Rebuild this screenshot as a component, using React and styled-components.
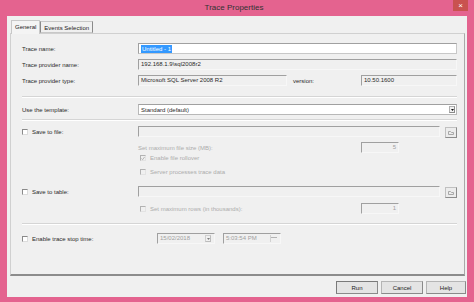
import React from "react";
import styled, { createGlobalStyle } from "styled-components";

const Global = createGlobalStyle`
  html, body { margin: 0; padding: 0; background: #e4638f; }
  body { font-family: "Liberation Sans", Arial, sans-serif; }
  * { box-sizing: border-box; }
`;

const Window = styled.div`
  width: 474px;
  height: 302px;
  background: #e4638f;
  display: flex;
  flex-direction: column;
  overflow: hidden;
`;

const TitleBar = styled.div`
  height: 16px;
  display: grid;
  grid-template-columns: 1fr auto 1fr;
  align-items: center;
  padding-right: 6px;
`;

const Title = styled.div`
  grid-column: 2;
  font-size: 8px;
  color: #333;
  line-height: 16px;
`;

const Close = styled.div`
  grid-column: 3;
  justify-self: end;
  align-self: start;
  width: 15px;
  height: 11px;
  background: #c9524f;
  color: #fff;
  font-size: 8px;
  line-height: 11px;
  text-align: center;
`;

const Client = styled.div`
  margin: 0 7px 5px 7px;
  flex: 1;
  background: #f0f0f0;
  display: flex;
  flex-direction: column;
`;

const Tabs = styled.div`
  height: 17px;
  display: flex;
  align-items: flex-end;
  padding-left: 4px;
`;

const Tab = styled.div`
  font-size: 6px;
  color: #222;
  height: ${(p) => (p.$active ? 14 : 12)}px;
  line-height: ${(p) => (p.$active ? 13 : 12)}px;
  padding: 0 3px;
  background: ${(p) => (p.$active ? "#f4f4f4" : "#f0f0f0")};
  border: 1px solid #c8c8c8;
  border-bottom: ${(p) => (p.$active ? "none" : "1px solid #c8c8c8")};
  border-left-color: ${(p) => (p.$active ? "#c8c8c8" : "#8a8a8a")};
  border-right-color: ${(p) => (p.$active ? "#c8c8c8" : "#8a8a8a")};
  position: relative;
  z-index: ${(p) => (p.$active ? 2 : 1)};
  margin-bottom: ${(p) => (p.$active ? -1 : 0)}px;
`;

const Panel = styled.div`
  margin: 0 2px 0 3px;
  height: 243px;
  border: 1px solid #d0d0d0;
  border-right: 1px solid #a9a9a9;
  border-bottom: 2px solid #8c8c8c;
  background: #f0f0f0;
  padding: 9px 7px 0 11px;
  display: flex;
  flex-direction: column;
`;

const Row = styled.div`
  display: flex;
  align-items: center;
  height: ${(p) => p.$h || 11}px;
  margin-top: ${(p) => p.$mt || 0}px;
  font-size: 6px;
  color: #2a2a2a;
`;

const Label = styled.div`
  width: ${(p) => p.$w || 116}px;
  flex: none;
  font-size: 6px;
  color: ${(p) => (p.$disabled ? "#acacac" : "#2a2a2a")};
  white-space: nowrap;
`;

const Field = styled.div`
  height: 11px;
  width: ${(p) => (p.$w ? `${p.$w}px` : "auto")};
  flex: ${(p) => (p.$w ? "none" : "1")};
  background: ${(p) => (p.$white ? "#fff" : "#f0f0f0")};
  border-top: 1px solid #a0a0a0;
  border-left: 1px solid #a0a0a0;
  border-right: 1px solid ${(p) => (p.$white ? "#c8c8c8" : "#f7f7f7")};
  border-bottom: 1px solid ${(p) => (p.$white ? "#c8c8c8" : "#f7f7f7")};
  font-size: 6px;
  line-height: 9px;
  padding: 0 2px;
  color: ${(p) => (p.$disabled ? "#a0a0a0" : "#2a2a2a")};
  white-space: nowrap;
  overflow: hidden;
  display: flex;
  align-items: center;
  justify-content: ${(p) => (p.$right ? "flex-end" : "flex-start")};
`;

const Selected = styled.span`
  background: #3399ff;
  color: #fff;
  line-height: 8px;
  padding: 0 1px;
`;

const Separator = styled.div`
  height: 2px;
  margin-top: ${(p) => p.$mt || 0}px;
  border-top: 1px solid #d5d5d5;
  border-bottom: 1px solid #ffffff;
`;

const Combo = styled.div`
  flex: 1;
  height: 11px;
  background: #fff;
  border: 1px solid #b8b8b8;
  border-top-color: #a0a0a0;
  display: flex;
  align-items: center;
  font-size: 6px;
  color: #2a2a2a;
  padding-left: 2px;
`;

const ComboText = styled.div`
  flex: 1;
`;

const DropBtn = styled.div`
  width: 6px;
  height: 7px;
  margin-right: 1px;
  border: 1px solid #b0b0b0;
  border-right-color: #8a8a8a;
  border-bottom-color: #8a8a8a;
  background: #f0f0f0;
  display: flex;
  align-items: center;
  justify-content: center;
  opacity: ${(p) => (p.$disabled ? 0.5 : 1)};
`;

const Check = styled.div`
  width: 6px;
  height: 6px;
  flex: none;
  border-top: 1px solid #8a8a8a;
  border-left: 1px solid #8a8a8a;
  border-right: 1px solid #dcdcdc;
  border-bottom: 1px solid #dcdcdc;
  background: ${(p) => (p.$disabled ? "#f0f0f0" : "#fff")};
  margin-right: ${(p) => p.$mr || 4}px;
  display: flex;
  align-items: center;
  justify-content: center;
  opacity: ${(p) => (p.$disabled ? 0.6 : 1)};
`;

const Browse = styled.div`
  width: 12px;
  height: 11px;
  margin-left: 5px;
  margin-top: 2px;
  flex: none;
  border: 1px solid #c0c0c0;
  border-right-color: #8c8c8c;
  border-bottom-color: #8c8c8c;
  background: #ececec;
  display: flex;
  align-items: center;
  justify-content: center;
`;

const Indent = styled.div`
  width: ${(p) => p.$w}px;
  flex: none;
`;

const Spacer = styled.div`
  flex: 1;
`;

const Spin = styled.div`
  width: 7px;
  height: 7px;
  display: flex;
  flex-direction: column;
  justify-content: space-between;
  border-left: 1px solid #c4c4c4;
  margin-left: auto;
  margin-right: 1px;
  opacity: 0.7;
`;

const SpinHalf = styled.div`
  height: 3px;
  border-bottom: 1px solid #9a9a9a;
`;

const Buttons = styled.div`
  display: flex;
  justify-content: flex-end;
  gap: 3px;
  padding: 5px 1px 0 0;
`;

const Button = styled.div`
  width: ${(p) => p.$w}px;
  height: 13px;
  background: #e4e4e4;
  border: 1px solid ${(p) => (p.$default ? "#7a7a7a" : "#b5b5b5")};
  border-right-color: #8a8a8a;
  border-bottom-color: #8a8a8a;
  font-size: 6px;
  color: #222;
  display: flex;
  align-items: center;
  justify-content: center;
`;

const Arrow = () => (
  <svg width="3" height="2" viewBox="0 0 3 2">
    <path d="M0 0h3L1.5 2z" fill="#111" />
  </svg>
);

const Tick = () => (
  <svg width="5" height="5" viewBox="0 0 5 5">
    <path d="M0.5 2.5l1.5 1.5 2.5-3.5" stroke="#777" strokeWidth="1" fill="none" />
  </svg>
);

const BrowseIcon = () => (
  <svg width="6" height="5" viewBox="0 0 6 5">
    <path d="M0.5 1.5h2l1 1h2v2h-5z" stroke="#a8a8a8" strokeWidth="1" fill="none" />
  </svg>
);

export default function App() {
  return (
    <>
      <Global />
      <Window>
        <TitleBar>
          <Title>Trace Properties</Title>
          <Close>×</Close>
        </TitleBar>
        <Client>
          <Tabs>
            <Tab $active>General</Tab>
            <Tab>Events Selection</Tab>
          </Tabs>
          <Panel>
            <Row>
              <Label>Trace name:</Label>
              <Field $white>
                <Selected>Untitled - 1</Selected>
              </Field>
            </Row>
            <Row $mt={5}>
              <Label>Trace provider name:</Label>
              <Field>192.168.1.9\sql2008r2</Field>
            </Row>
            <Row $mt={5}>
              <Label>Trace provider type:</Label>
              <Field $w={149}>Microsoft SQL Server 2008 R2</Field>
              <Indent $w={6} />
              <Label $w={68}>version:</Label>
              <Field>10.50.1600</Field>
            </Row>
            <Separator $mt={10} />
            <Row $mt={6}>
              <Label>Use the template:</Label>
              <Combo>
                <ComboText>Standard (default)</ComboText>
                <DropBtn>
                  <Arrow />
                </DropBtn>
              </Combo>
            </Row>
            <Separator $mt={4} />
            <Row $mt={5}>
              <Check />
              <Label $w={106}>Save to file:</Label>
              <Field />
              <Browse>
                <BrowseIcon />
              </Browse>
            </Row>
            <Row $mt={5}>
              <Indent $w={116} />
              <Label $w={223} $disabled>Set maximum file size (MB):</Label>
              <Field $w={38} $right $disabled>5</Field>
            </Row>
            <Row $h={10}>
              <Indent $w={118} />
              <Check $disabled $mr={4}>
                <Tick />
              </Check>
              <Label $disabled>Enable file rollover</Label>
            </Row>
            <Row $h={10} $mt={4}>
              <Indent $w={118} />
              <Check $disabled $mr={4} />
              <Label $disabled>Server processes trace data</Label>
            </Row>
            <Row $mt={9}>
              <Check />
              <Label $w={106}>Save to table:</Label>
              <Field />
              <Browse>
                <BrowseIcon />
              </Browse>
            </Row>
            <Row $mt={6}>
              <Indent $w={118} />
              <Check $disabled $mr={4} />
              <Label $w={211} $disabled>Set maximum rows (in thousands):</Label>
              <Field $w={38} $right $disabled>1</Field>
            </Row>
            <Separator $mt={9} />
            <Row $mt={8}>
              <Check />
              <Label $w={125}>Enable trace stop time:</Label>
              <Field $w={58} $disabled>
                15/02/2018
                <Spacer />
                <DropBtn $disabled>
                  <Arrow />
                </DropBtn>
              </Field>
              <Indent $w={8} />
              <Field $w={58} $disabled>
                5:03:54 PM
                <Spin>
                  <SpinHalf />
                </Spin>
              </Field>
            </Row>
          </Panel>
          <Buttons>
            <Button $w={42} $default>Run</Button>
            <Button $w={42}>Cancel</Button>
            <Button $w={40}>Help</Button>
          </Buttons>
        </Client>
      </Window>
    </>
  );
}
